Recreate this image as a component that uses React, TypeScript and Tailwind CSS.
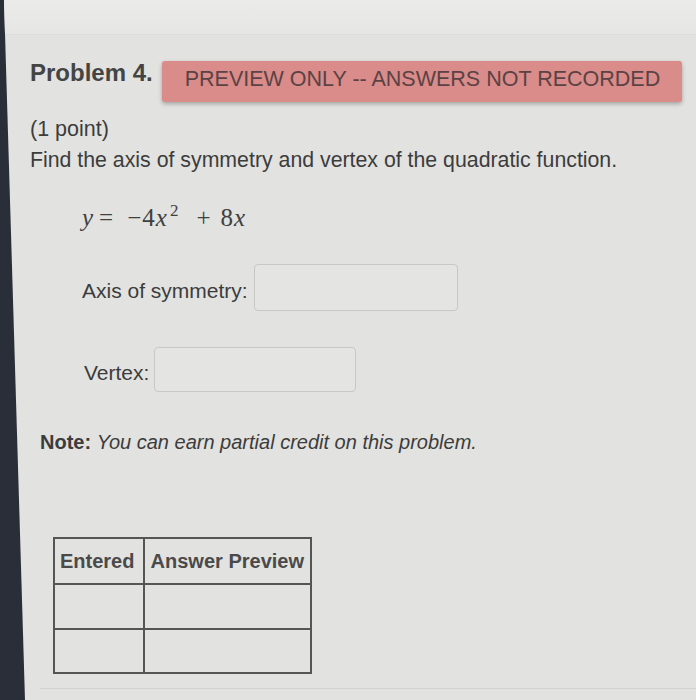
import React from "react";

export default function App() {
  return (
    <div className="w-[696px] h-[700px] bg-[#2a2e38] overflow-hidden">
      <div className="h-full bg-[#e2e2e0] [clip-path:polygon(4px_0,100%_0,100%_100%,25px_100%)] flex flex-col font-['Liberation_Sans',Arial,sans-serif] text-[#3c3c3c]">
        <div className="h-[35px] bg-gradient-to-b from-[#ebebe9] to-[#e6e6e4] border-b border-[#dddddb]" />

        <div className="pl-[30px] pt-[26px] flex items-start">
          <span className="text-[24px] font-bold leading-[24px] text-[#444444] whitespace-nowrap">
            Problem 4.
          </span>
          <div className="ml-[9px] w-[520px] bg-[#d98c89] rounded-[3px] shadow-[0_2px_4px_rgba(0,0,0,0.28)] pt-[7px] pb-[11px] pl-[23px] text-[21.5px] leading-[23px] text-[#5b4245] whitespace-nowrap">
            PREVIEW ONLY -- ANSWERS NOT RECORDED
          </div>
        </div>

        <div className="pl-[30px] flex flex-col items-start">
          <div className="mt-[12px] text-[21.5px] leading-[31px]">(1 point)</div>
          <div className="text-[21.3px] leading-[31px] whitespace-nowrap">
            Find the axis of symmetry and vertex of the quadratic function.
          </div>

          <div className="mt-[27px] ml-[52px] flex items-baseline font-['Liberation_Serif','Times_New_Roman',serif] text-[25px] leading-[30px] text-[#404040]">
            <span className="italic">y</span>
            <span className="ml-[6px]">=</span>
            <span className="ml-[14px]">−</span>
            <span className="ml-[1px]">4</span>
            <span className="italic ml-[1px] mr-[2px]">x</span>
            <span className="text-[17px] relative -top-[10px] ml-[1px]">2</span>
            <span className="ml-[18px]">+</span>
            <span className="ml-[10px]">8</span>
            <span className="italic ml-[1px]">x</span>
          </div>

          <div className="mt-[28px] ml-[52px] flex items-center">
            <span className="text-[21px] leading-[30px] pt-[6px] whitespace-nowrap">Axis of symmetry:</span>
            <div className="ml-[6px] w-[204px] h-[47px] border border-[#c8c8c6] rounded-[4px] bg-[#e4e4e2]" />
          </div>

          <div className="mt-[36px] ml-[54px] flex items-center">
            <span className="text-[21px] leading-[30px] pt-[6px] whitespace-nowrap">Vertex:</span>
            <div className="ml-[5px] w-[202px] h-[45px] border border-[#c8c8c6] rounded-[4px] bg-[#e4e4e2]" />
          </div>

          <div className="mt-[36px] ml-[10px] text-[20px] leading-[28px] whitespace-nowrap">
            <span className="font-bold">Note:</span>{" "}
            <span className="italic">You can earn partial credit on this problem.</span>
          </div>

          <table className="mt-[81px] ml-[23px] border-collapse w-[259px] text-[#4a4a4a]">
            <thead>
              <tr className="h-[46px]">
                <th className="w-[90px] border-2 border-[#555555] px-[5px] text-left text-[20px] leading-[24px] font-bold whitespace-nowrap">
                  Entered
                </th>
                <th className="border-2 border-[#555555] px-[6px] text-left text-[20px] leading-[24px] font-bold whitespace-nowrap">
                  Answer Preview
                </th>
              </tr>
            </thead>
            <tbody>
              <tr className="h-[45px]">
                <td className="border-2 border-[#555555]" />
                <td className="border-2 border-[#555555]" />
              </tr>
              <tr className="h-[44px]">
                <td className="border-2 border-[#555555]" />
                <td className="border-2 border-[#555555]" />
              </tr>
            </tbody>
          </table>
        </div>

        <div className="mt-[14px] ml-[40px] h-px bg-[#d3d3d1]" />
      </div>
    </div>
  );
}
